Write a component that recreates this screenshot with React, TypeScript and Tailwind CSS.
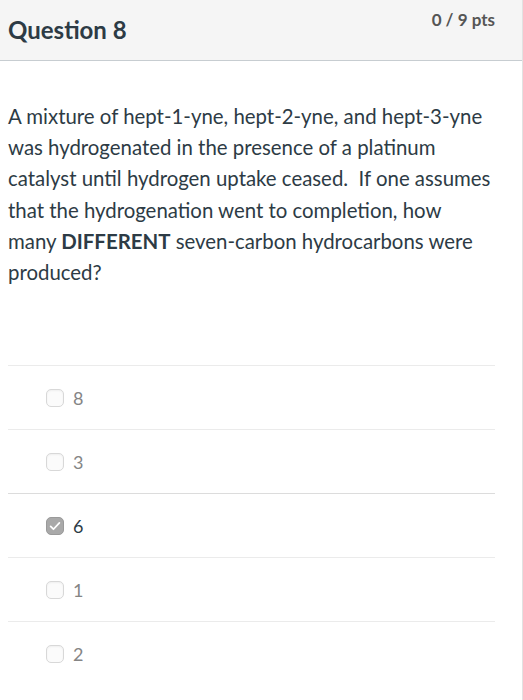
import React from 'react';

const ANSWERS = [
  { label: '8', checked: false },
  { label: '3', checked: false },
  { label: '6', checked: true },
  { label: '1', checked: false },
  { label: '2', checked: false },
];

const Checkbox: React.FC<{ checked: boolean }> = ({ checked }) =>
  checked ? (
    <span className="flex h-[18px] w-[18px] items-center justify-center rounded-[5px] border border-[#9a9a9a] bg-[#a9a9a9]">
      <svg viewBox="0 0 16 16" className="h-[14px] w-[14px]" fill="none">
        <path
          d="M3 8.5l3.2 3.2L13 4.5"
          stroke="#ffffff"
          strokeWidth="2"
          strokeLinecap="round"
          strokeLinejoin="round"
        />
      </svg>
    </span>
  ) : (
    <span className="block h-[18px] w-[18px] rounded-[5px] border border-[#d8d8d8] bg-[#fbfbfb] shadow-[inset_0_1px_2px_rgba(0,0,0,0.05)]" />
  );

export default function App() {
  return (
    <div
      className="min-h-[700px] w-[523px] bg-white border-r border-[#e2e2e2]"
      style={{ fontFamily: 'Lato, "Open Sans", sans-serif' }}
    >
      {/* header */}
      <div className="flex h-[61px] items-start justify-between border-b border-[#c7cdd1] bg-[#f5f5f5] pl-2 pr-[27px]">
        <h2 className="mt-[15px] text-[24px] font-bold leading-[30px] text-[#2d3b45]">
          Question 8
        </h2>
        <span className="mt-[9px] text-[17px] font-bold leading-[22px] text-[#555555]">
          0 / 9 pts
        </span>
      </div>

      {/* question text */}
      <div className="px-2 pt-[40px] pb-[77px]">
        <p className="w-[485px] text-[20.4px] leading-[31.2px] text-[#2d3b45]">
          A mixture of hept-1-yne, hept-2-yne, and hept-3-yne was
          hydrogenated in the presence of a platinum catalyst until hydrogen
          uptake ceased.&nbsp; If one assumes that the hydrogenation went to
          completion, how many <strong>DIFFERENT</strong> seven-carbon
          hydrocarbons were produced?
        </p>
      </div>

      {/* answers */}
      <div className="ml-2 mr-[27px]">
        {ANSWERS.map(a => (
          <div
            key={a.label}
            className={`flex h-[64px] items-center gap-[9px] border-t pl-[38px] ${
              a.checked ? 'border-[#dcdcdc]' : 'border-[#ebebeb]'
            }`}
          >
            <Checkbox checked={a.checked} />
            <span
              className={`text-[18px] leading-none ${
                a.checked ? 'text-[#2d3b45]' : 'text-[#858585]'
              }`}
            >
              {a.label}
            </span>
          </div>
        ))}
      </div>
    </div>
  );
}
